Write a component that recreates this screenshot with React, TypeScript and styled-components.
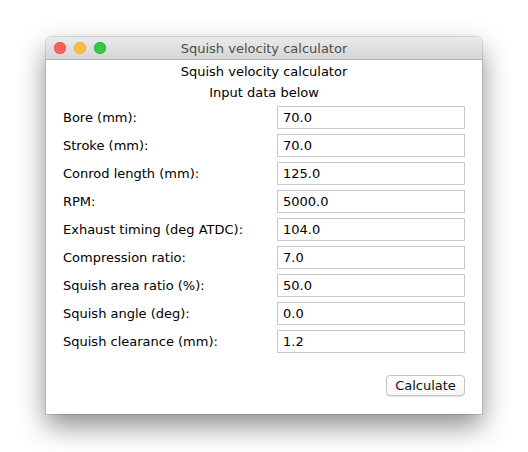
import React from "react";
import styled, { createGlobalStyle } from "styled-components";

const Global = createGlobalStyle`
  html, body { margin: 0; padding: 0; background: #ffffff; }
  body { font-family: "DejaVu Sans", "Liberation Sans", sans-serif; }
  * { box-sizing: border-box; }
`;

const Page = styled.div`
  width: 528px;
  height: 452px;
  padding: 37px 0 0 46px;
`;

const Window = styled.div`
  width: 436px;
  height: 377px;
  background: #ffffff;
  border-radius: 5px 5px 0 0;
  box-shadow: 0 12px 28px rgba(0, 0, 0, 0.45), 0 0 0 1px rgba(0, 0, 0, 0.12);
  display: flex;
  flex-direction: column;
  overflow: hidden;
`;

const TitleBar = styled.div`
  height: 23px;
  flex: none;
  display: grid;
  grid-template-columns: 1fr auto 1fr;
  align-items: center;
  background: linear-gradient(#ebebeb, #d5d5d5);
  border-bottom: 1px solid #b1b1b1;
  padding: 0 8px;
`;

const Lights = styled.div`
  display: flex;
  gap: 8px;
`;

const Light = styled.span<{ $c: string; $b: string }>`
  width: 12px;
  height: 12px;
  border-radius: 50%;
  background: ${(p) => p.$c};
  box-shadow: inset 0 0 0 0.5px ${(p) => p.$b};
`;

const WinTitle = styled.div`
  font-size: 13px;
  color: #4d4d4d;
  font-family: "DejaVu Sans", sans-serif;
`;

const Content = styled.div`
  flex: 1;
  display: flex;
  flex-direction: column;
  padding: 1px 17px 0 17px;
  color: #000;
  font-size: 13px;
`;

const Heading = styled.div`
  text-align: center;
  height: 21px;
  line-height: 21px;
`;

const Form = styled.div`
  display: grid;
  grid-template-columns: 1fr 188px;
  row-gap: 5px;
  margin-top: 3px;
`;

const Label = styled.div`
  height: 23px;
  line-height: 23px;
`;

const Input = styled.input`
  height: 23px;
  width: 188px;
  border: 1px solid #c8c8c8;
  padding: 0 5px;
  font-family: "DejaVu Sans", sans-serif;
  font-size: 13px;
  color: #000;
  outline: none;
  background: #fff;
`;

const Footer = styled.div`
  display: flex;
  justify-content: flex-end;
  margin-top: 22px;
`;

const Button = styled.button`
  width: 79px;
  height: 21px;
  border: 1px solid #c4c4c4;
  border-radius: 4px;
  background: linear-gradient(#ffffff, #f6f6f6);
  box-shadow: 0 0.5px 1px rgba(0, 0, 0, 0.12);
  font-family: "DejaVu Sans", sans-serif;
  font-size: 13px;
  color: #111;
  padding: 0;
`;

const fields: [string, string][] = [
  ["Bore (mm):", "70.0"],
  ["Stroke (mm):", "70.0"],
  ["Conrod length (mm):", "125.0"],
  ["RPM:", "5000.0"],
  ["Exhaust timing (deg ATDC):", "104.0"],
  ["Compression ratio:", "7.0"],
  ["Squish area ratio (%):", "50.0"],
  ["Squish angle (deg):", "0.0"],
  ["Squish clearance (mm):", "1.2"],
];

export default function App() {
  return (
    <>
      <Global />
      <Page>
        <Window>
          <TitleBar>
            <Lights>
              <Light $c="#fc605c" $b="#de4b45" />
              <Light $c="#fdbc40" $b="#dea236" />
              <Light $c="#34c84a" $b="#27aa35" />
            </Lights>
            <WinTitle>Squish velocity calculator</WinTitle>
            <span />
          </TitleBar>
          <Content>
            <Heading>Squish velocity calculator</Heading>
            <Heading>Input data below</Heading>
            <Form>
              {fields.map(([l, v]) => (
                <React.Fragment key={l}>
                  <Label>{l}</Label>
                  <Input defaultValue={v} />
                </React.Fragment>
              ))}
            </Form>
            <Footer>
              <Button>Calculate</Button>
            </Footer>
          </Content>
        </Window>
      </Page>
    </>
  );
}
